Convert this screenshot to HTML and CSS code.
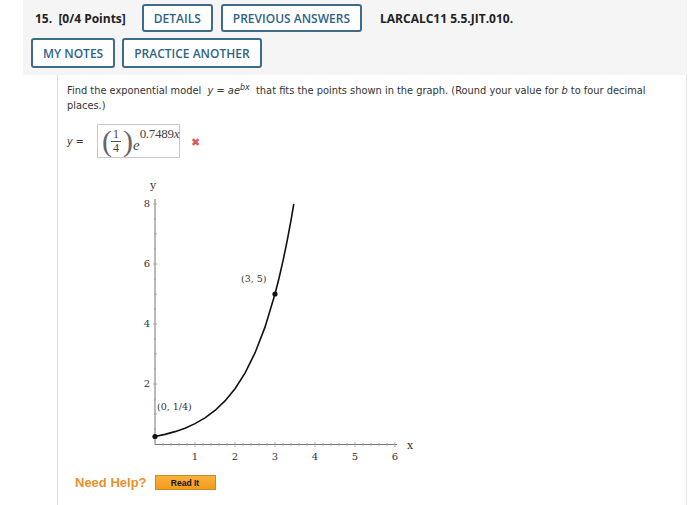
FILE: index.html
```html
<!DOCTYPE html>
<html>
<head>
<meta charset="utf-8">
<link rel="stylesheet" href="styles.css">
</head>
<body>
<div class="header">
  <div class="row row1">
    <span class="qnum">15.&nbsp; [0/4 Points]</span>
    <span class="btn">DETAILS</span>
    <span class="btn">PREVIOUS ANSWERS</span>
    <span class="code">LARCALC11 5.5.JIT.010.</span>
  </div>
  <div class="row row2">
    <span class="btn tall">MY NOTES</span>
    <span class="btn tall">PRACTICE ANOTHER</span>
  </div>
</div>
<div class="content">
  <p class="prompt">Find the exponential model&nbsp; <i>y</i> = <i>ae<sup>bx</sup></i>&nbsp; that fits the points shown in the graph. (Round your value for <i>b</i> to four decimal places.)</p>
  <div class="answer">
    <span class="ylabel"><i>y</i> =</span>
    <span class="box">
      <span class="paren">(</span>
      <span class="frac"><span class="num">1</span><span class="den">4</span></span>
      <span class="paren">)</span>
      <span class="e">e</span>
      <span class="exp">0.7489<i>x</i></span>
    </span>
    <span class="wrong">✖</span>
  </div>
  <svg class="graph" width="300" height="300" viewBox="0 0 300 300">
    <g stroke="#777" stroke-width="1" fill="none">
      <line x1="25" y1="29" x2="25" y2="274.5"/>
      <line x1="25" y1="274.5" x2="267" y2="274.5"/>
    </g>
    <g stroke="#999" stroke-width="0.8" fill="none">
      <path d="M33 273v3M41 273v3M49 273v3M57 273v3M65 272v5M73 273v3M81 273v3M89 273v3M97 273v3M105 272v5M113 273v3M121 273v3M129 273v3M137 273v3M145 272v5M153 273v3M161 273v3M169 273v3M177 273v3M185 272v5M193 273v3M201 273v3M209 273v3M217 273v3M225 272v5M233 273v3M241 273v3M249 273v3M257 273v3M265 272v5"/>
      <path d="M24 259h2M24 244h3M24 229h2M23 214h4M24 199h2M24 184h3M24 169h2M23 154h4M24 139h2M24 124h3M24 109h2M23 94h4M24 79h2M24 64h3M24 49h2M23 34h4"/>
    </g>
    <g font-family="DejaVu Serif, serif" font-size="10" fill="#333">
      <text x="23" y="19" text-anchor="middle" font-size="11">y</text>
      <text x="20" y="217" text-anchor="end">2</text>
      <text x="20" y="157" text-anchor="end">4</text>
      <text x="20" y="97" text-anchor="end">6</text>
      <text x="20" y="37" text-anchor="end">8</text>
      <text x="65" y="290" text-anchor="middle">1</text>
      <text x="105" y="290" text-anchor="middle">2</text>
      <text x="145" y="290" text-anchor="middle">3</text>
      <text x="185" y="290" text-anchor="middle">4</text>
      <text x="225" y="290" text-anchor="middle">5</text>
      <text x="265" y="290" text-anchor="middle">6</text>
      <text x="280" y="279" text-anchor="middle" font-size="11">x</text>
      <text x="111" y="112" font-size="9.5">(3, 5)</text>
      <text x="27" y="240" font-size="9.5">(0, 1/4)</text>
    </g>
    <polyline fill="none" stroke="#111" stroke-width="1.6" points="25,266.5 35,264.37 45,261.64 55,258.14 65,253.64 75,247.87 85,240.46 95,230.95 105,218.74 115,203.07 125,182.96 135,157.14 145,124 149,108.25 153,90.85 157,71.59 161,50.32 163.8,34"/>
    <circle cx="25" cy="266.5" r="2.6" fill="#111"/>
    <circle cx="145" cy="124" r="2.6" fill="#111"/>
  </svg>
  <div class="help">
    <span class="need">Need Help?</span>
    <span class="readit">Read It</span>
  </div>
</div>
</body>
</html>
```
FILE: styles.css
```css
html, body {
  margin: 0;
  padding: 0;
  background: #fff;
}
body {
  width: 700px;
  height: 505px;
  overflow: hidden;
}
.header {
  margin: 0 13px 0 23px;
  background: #f5f5f5;
  height: 75px;
  box-sizing: border-box;
  padding-top: 4px;
  font-family: "Open Sans", sans-serif;
}
.row {
  display: flex;
  align-items: center;
}
.row1 {
  padding-left: 12px;
  height: 28px;
}
.row2 {
  padding-left: 8px;
  margin-top: 6px;
  gap: 7px;
}
.qnum {
  font-weight: 700;
  font-size: 12px;
  color: #222;
  margin-right: 16px;
}
.btn {
  display: inline-flex;
  align-items: center;
  height: 28px;
  box-sizing: border-box;
  padding: 0 10px;
  border: 2px solid #3e6b89;
  border-radius: 3px;
  background: #fff;
  color: #2f6386;
  font-size: 12px;
  font-weight: 600;
  margin-right: 8px;
}
.row2 .btn {
  margin-right: 0;
}
.btn.tall {
  height: 30px;
}
.code {
  margin-left: 10px;
  font-weight: 700;
  font-size: 12px;
  color: #222;
}
.content {
  margin: 0 13px 0 57px;
  border-left: 1px solid #dcdcdc;
  border-right: 1px solid #e6e6e6;
  height: 430px;
  padding: 8px 0 0 9px;
  font-family: "DejaVu Sans", Verdana, sans-serif;
  color: #333;
}
.prompt {
  margin: 0;
  font-size: 9.85px;
  line-height: 15px;
  padding-right: 20px;
}
.prompt sup {
  font-size: 8px;
  line-height: 0;
  vertical-align: 4px;
}
.answer {
  display: flex;
  align-items: center;
  margin-top: 11px;
  height: 34px;
}
.ylabel {
  font-size: 9.6px;
  width: 30px;
}
.box {
  display: flex;
  align-items: flex-start;
  height: 34px;
  width: 83px;
  box-sizing: border-box;
  border: 1px solid #c8c8c8;
  padding: 0 0 0 4px;
  font-family: "Liberation Serif", serif;
  color: #444;
}
.box > span {
  flex-shrink: 0;
}
.paren {
  font-size: 30px;
  line-height: 32px;
  width: 7px;
  color: #666;
}
.frac {
  display: flex;
  flex-direction: column;
  align-items: center;
  font-size: 12px;
  line-height: 13px;
  margin: 3px 2px 0 2px;
}
.frac .num {
  border-bottom: 1px solid #555;
  padding: 0 2px;
}
.e {
  font-style: italic;
  font-size: 15px;
  line-height: 15px;
  margin-top: 13px;
  margin-left: 3px;
}
.exp {
  font-size: 13px;
  line-height: 14px;
  margin-top: 2px;
  letter-spacing: -0.3px;
}
.wrong {
  color: #e05656;
  font-size: 11px;
  margin-left: 11px;
  margin-top: 2px;
}
.graph {
  display: block;
  margin: 12px 0 0 63px;
}
.help {
  display: flex;
  align-items: center;
  margin-top: 5px;
  padding-left: 8px;
}
.need {
  font-family: "Liberation Sans", Arial, sans-serif;
  font-weight: 700;
  font-size: 13px;
  color: #e8912e;
}
.readit {
  margin-left: 8px;
  width: 61px;
  height: 15px;
  box-sizing: border-box;
  display: flex;
  align-items: center;
  justify-content: center;
  background: linear-gradient(#f8b13c, #f39b1c);
  border: 1px solid #c98a2a;
  font-family: "Liberation Sans", Arial, sans-serif;
  font-weight: 700;
  font-size: 8.5px;
  color: #111;
}
```
